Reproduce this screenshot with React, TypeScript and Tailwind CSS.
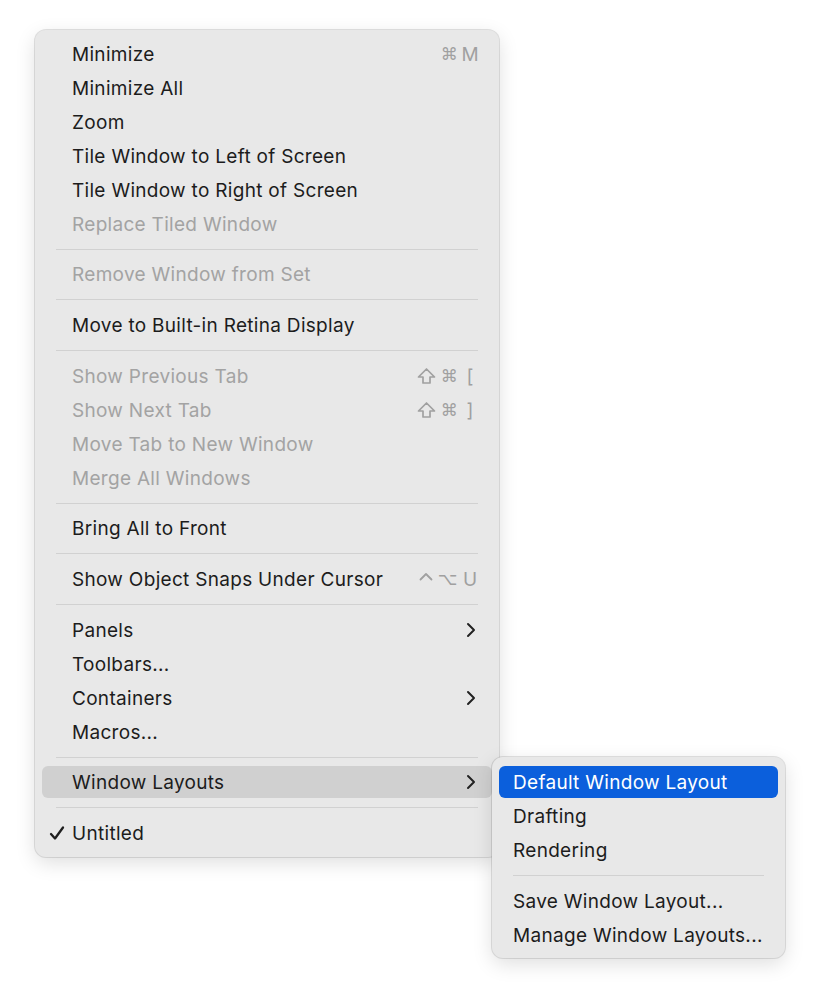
import React from 'react';

type Mod = 'cmd' | 'shift' | 'ctrl' | 'opt';

type Row =
  | { kind: 'item'; label: string; disabled?: boolean; mods?: Mod[]; keyChar?: string; submenu?: boolean; checked?: boolean; active?: boolean }
  | { kind: 'sep'; h: 16 | 17 };

const MAIN: Row[] = [
  { kind: 'item', label: 'Minimize', mods: ['cmd'], keyChar: 'M' },
  { kind: 'item', label: 'Minimize All' },
  { kind: 'item', label: 'Zoom' },
  { kind: 'item', label: 'Tile Window to Left of Screen' },
  { kind: 'item', label: 'Tile Window to Right of Screen' },
  { kind: 'item', label: 'Replace Tiled Window', disabled: true },
  { kind: 'sep', h: 16 },
  { kind: 'item', label: 'Remove Window from Set', disabled: true },
  { kind: 'sep', h: 17 },
  { kind: 'item', label: 'Move to Built-in Retina Display' },
  { kind: 'sep', h: 17 },
  { kind: 'item', label: 'Show Previous Tab', disabled: true, mods: ['shift', 'cmd'], keyChar: '[' },
  { kind: 'item', label: 'Show Next Tab', disabled: true, mods: ['shift', 'cmd'], keyChar: ']' },
  { kind: 'item', label: 'Move Tab to New Window', disabled: true },
  { kind: 'item', label: 'Merge All Windows', disabled: true },
  { kind: 'sep', h: 16 },
  { kind: 'item', label: 'Bring All to Front' },
  { kind: 'sep', h: 17 },
  { kind: 'item', label: 'Show Object Snaps Under Cursor', mods: ['ctrl', 'opt'], keyChar: 'U' },
  { kind: 'sep', h: 17 },
  { kind: 'item', label: 'Panels', submenu: true },
  { kind: 'item', label: 'Toolbars...' },
  { kind: 'item', label: 'Containers', submenu: true },
  { kind: 'item', label: 'Macros...' },
  { kind: 'sep', h: 16 },
  { kind: 'item', label: 'Window Layouts', submenu: true, active: true },
  { kind: 'sep', h: 17 },
  { kind: 'item', label: 'Untitled', checked: true },
];

const SUB: Row[] = [
  { kind: 'item', label: 'Default Window Layout', active: true },
  { kind: 'item', label: 'Drafting' },
  { kind: 'item', label: 'Rendering' },
  { kind: 'sep', h: 17 },
  { kind: 'item', label: 'Save Window Layout...' },
  { kind: 'item', label: 'Manage Window Layouts...' },
];

function ModGlyph({ mod }: { mod: Mod }) {
  if (mod === 'shift') {
    return (
      <svg width="19" height="17" viewBox="0 0 19 17">
        <path d="M9.5 1.5 L17.5 9.5 H13 V15.5 H6 V9.5 H1.5 Z" fill="none" stroke="#a0a0a0" strokeWidth="1.7" strokeLinejoin="round" />
      </svg>
    );
  }
  if (mod === 'ctrl') {
    return (
      <svg width="14" height="17" viewBox="0 0 14 17">
        <path d="M1.5 9 L7 3.5 L12.5 9" fill="none" stroke="#a0a0a0" strokeWidth="1.8" strokeLinecap="round" strokeLinejoin="round" />
      </svg>
    );
  }
  return <span className="font-['DejaVu_Sans',sans-serif] text-[17px]">{mod === 'cmd' ? '⌘' : '⌥'}</span>;
}

function Chevron() {
  return (
    <svg width="10" height="16" viewBox="0 0 10 16" className="absolute right-[16px] top-1/2 -translate-y-1/2">
      <path d="M2 2 L8 8 L2 14" fill="none" stroke="#222" strokeWidth="2" strokeLinecap="round" strokeLinejoin="round" />
    </svg>
  );
}

function Check() {
  return (
    <svg width="16" height="16" viewBox="0 0 16 16" className="absolute left-[7px] top-1/2 -translate-y-1/2">
      <path d="M2 9 L6 13.5 L14 2.5" fill="none" stroke="#1f1f1f" strokeWidth="2.3" strokeLinecap="round" strokeLinejoin="round" />
    </svg>
  );
}

function Separator({ h }: { h: 16 | 17 }) {
  return (
    <div className={`${h === 16 ? 'h-[16px]' : 'h-[17px]'} flex items-center px-[21px]`}>
      <div className="h-px w-full bg-[#d1d1d1]" />
    </div>
  );
}

function MenuRow({ row, sub }: { row: Extract<Row, { kind: 'item' }>; sub?: boolean }) {
  const highlight = row.active
    ? sub ? 'bg-[#0b5fdc] text-white' : 'bg-[#d0d0d0] text-[#1c1c1c]'
    : row.disabled ? 'text-[#a3a3a3]' : 'text-[#1c1c1c]';
  return (
    <div className="h-[34px] px-[7px] py-px">
      <div className={`relative h-full rounded-[6px] flex items-center ${sub ? 'pl-[14px]' : 'pl-[30px]'} ${highlight}`}>
        {row.checked && <Check />}
        <span className="whitespace-nowrap">{row.label}</span>
        {row.mods && (
          <div className="absolute right-[10px] top-1/2 -translate-y-1/2 flex items-center text-[#a0a0a0]">
            <div className="flex items-center gap-[5px]">
              {row.mods.map((m) => <ModGlyph key={m} mod={m} />)}
            </div>
            <span className="w-[24px] text-center tracking-normal">{row.keyChar}</span>
          </div>
        )}
        {row.submenu && <Chevron />}
      </div>
    </div>
  );
}

function Menu({ rows, sub, className }: { rows: Row[]; sub?: boolean; className: string }) {
  return (
    <div className={`rounded-[11px] bg-[#e8e8e8] shadow-[0_0_0_1px_rgba(0,0,0,0.11),0_6px_20px_rgba(0,0,0,0.13)] ${className}`}>
      {rows.map((r, i) =>
        r.kind === 'sep' ? <Separator key={i} h={r.h} /> : <MenuRow key={i} row={r} sub={sub} />
      )}
    </div>
  );
}

export default function App() {
  return (
    <div className="w-[820px] h-[1000px] bg-white pl-[35px] pt-[30px] font-['Inter',sans-serif] text-[19px] tracking-[0.3px] leading-none antialiased">
      <div className="relative w-[464px]">
        <Menu rows={MAIN} className="w-[464px] py-[7px]" />
        <Menu rows={SUB} sub className="absolute left-[457px] top-[727px] w-[293px] pt-[8px] pb-[6px]" />
      </div>
    </div>
  );
}
